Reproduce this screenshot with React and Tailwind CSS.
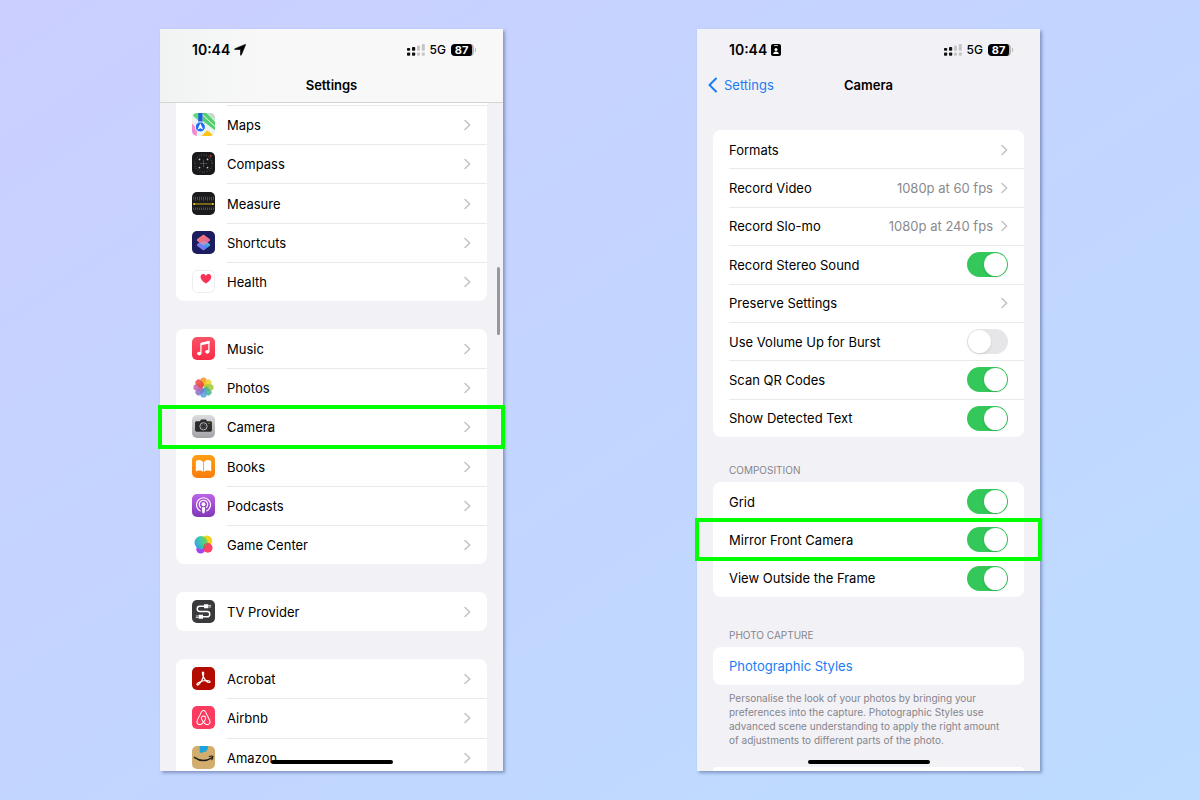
import React from 'react'
import { FaAirbnb } from 'react-icons/fa'

const MapsIcon = () => (
  <>
    <rect width="24" height="24" fill="#eef3f2" />
    <path d="M0 0h7v8L0 2z" fill="#5fdc7c" />
    <path d="M11 0h4l9 9v9L11 8z" fill="#4fd06c" />
    <path d="M11 2l13 12" stroke="#c9f0d2" strokeWidth="1.200" />
    <path d="M15 0h9v8z" fill="#b9e8c4" />
    <path d="M18 0q1 5 6 5V0z" fill="#cfd3cf" />
    <path d="M0 11l5 5v8H0z" fill="#f28bd0" />
    <path d="M10 24l6-6 7 6z" fill="#fbc513" />
    <path d="M6.500 0h4.500v10h-4.500z" fill="#1c62d8" />
    <circle cx="8.700" cy="14.500" r="5.300" fill="#1f70f0" stroke="#fff" strokeWidth="1" />
    <path d="M8.700 10.800l2.900 6.500-2.900-1.400-2.900 1.400z" fill="#fff" />
  </>
)

const CompassIcon = () => (
  <>
    <rect width="24" height="24" fill="#19191b" />
    <circle cx="12" cy="12" r="9" fill="none" stroke="#6f6f72" strokeWidth="1.500" strokeDasharray="0.500 2" />
    <path d="M12 8v8M8 12h8" stroke="#66666a" strokeWidth="0.700" />
    <g fill="#c9c9c9">
      <circle cx="7.800" cy="7.800" r="0.900" />
      <circle cx="16.200" cy="7.800" r="0.900" />
      <circle cx="7.800" cy="16.200" r="0.900" />
      <circle cx="16.200" cy="16.200" r="0.900" />
    </g>
    <path d="M19 2.500l2 2-2.500.5z" fill="#e0392e" />
  </>
)

const MeasureIcon = () => (
  <>
    <rect width="24" height="24" fill="#1b1b1d" />
    <path d="M1 6.500h22" stroke="#68686b" strokeWidth="3" strokeDasharray="0.700 1.400" />
    <path d="M3 8.500h18" stroke="#7c7c7e" strokeWidth="1" strokeDasharray="0.700 3.500" />
    <path d="M2 12.500h20" stroke="#d8b81c" strokeWidth="1" />
    <circle cx="2.200" cy="12.500" r="1" fill="#f8d62f" />
    <circle cx="21.800" cy="12.500" r="1" fill="#f8d62f" />
    <path d="M1 17.500h22" stroke="#68686b" strokeWidth="2.500" strokeDasharray="0.700 1.400" />
  </>
)

const ShortcutsIcon = () => (
  <>
    <defs>
      <linearGradient id="sc-top" x1="0" y1="0" x2="1" y2="1">
        <stop offset="0" stopColor="#f27f6c" />
        <stop offset="1" stopColor="#e05fa5" />
      </linearGradient>
      <linearGradient id="sc-bottom" x1="1" y1="0" x2="0" y2="1">
        <stop offset="0" stopColor="#3fd6c8" />
        <stop offset="0.500" stopColor="#4a8ff5" />
        <stop offset="1" stopColor="#b064f0" />
      </linearGradient>
    </defs>
    <rect width="24" height="24" fill="#1c1d5e" />
    <path d="M12 10.500l5.700 4.200L12 18.900l-5.700-4.200z" fill="url(#sc-bottom)" stroke="url(#sc-bottom)" strokeWidth="2.500" strokeLinejoin="round" />
    <path d="M12 5.100l5.700 4.200L12 13.500 6.300 9.300z" fill="url(#sc-top)" stroke="url(#sc-top)" strokeWidth="2.500" strokeLinejoin="round" />
    <path d="M12 10.500l4.800 1.700-4.300 2.700q-.5.300-1 0l-3.500-2.400z" fill="#b9a0cf" opacity="0.700" />
  </>
)

const HealthIcon = () => (
  <>
    <rect x="0.500" y="0.500" width="23" height="23" rx="5" fill="#fff" stroke="#ececee" />
    <path d="M14.500 14.200C11 11.700 8.900 9.900 8.900 7.300c0-1.800 1.300-3 2.800-3 1.200 0 2.200.6 2.800 1.600.6-1 1.600-1.600 2.800-1.600 1.500 0 2.800 1.200 2.800 3 0 2.600-2.100 4.400-5.600 6.900z" fill="#fb3158" />
  </>
)

const MusicIcon = () => (
  <>
    <defs>
      <linearGradient id="music-bg" x1="0" y1="0" x2="0" y2="1">
        <stop offset="0" stopColor="#fb5266" />
        <stop offset="1" stopColor="#fa2c46" />
      </linearGradient>
    </defs>
    <rect width="24" height="24" fill="url(#music-bg)" />
    <path d="M9.300 17V7l8.300-1.900v9.900" fill="none" stroke="#fff" strokeWidth="1.300" />
    <path d="M9.300 6l8.900-2v2.700l-8.900 2z" fill="#fff" />
    <ellipse cx="7.600" cy="17.300" rx="2.300" ry="1.900" fill="#fff" />
    <ellipse cx="16" cy="15.500" rx="2.300" ry="1.900" fill="#fff" />
  </>
)

const petals = ['#f7941c', '#e9d32b', '#9fca3f', '#45b585', '#559fde', '#8371c7', '#c066b0', '#f0473f']

const PhotosIcon = () => (
  <>
    <rect width="24" height="24" fill="#fff" />
    {petals.map((color, i) => (
      <rect
        key={color}
        x="8.700"
        y="1.500"
        width="6.600"
        height="9.800"
        rx="3.300"
        fill={color}
        opacity="0.850"
        transform={`rotate(${i * 45} 12 12)`}
      />
    ))}
  </>
)

const CameraIcon = () => (
  <>
    <defs>
      <linearGradient id="cam-bg" x1="0" y1="0" x2="0" y2="1">
        <stop offset="0" stopColor="#dcdcde" />
        <stop offset="1" stopColor="#a3a3a7" />
      </linearGradient>
    </defs>
    <rect width="24" height="24" fill="url(#cam-bg)" />
    <path d="M4.800 6.500h3.500l1.200-1.800h5l1.200 1.800h3.500c.9 0 1.600.6 1.600 1.500v8c0 .9-.7 1.500-1.600 1.500H4.800c-.9 0-1.600-.6-1.600-1.500V8c0-.9.700-1.500 1.600-1.500z" fill="#2b2b2d" />
    <circle cx="12" cy="11.800" r="3.800" fill="#2b2b2d" stroke="#c8c8ca" strokeWidth="0.900" />
    <circle cx="12" cy="11.800" r="2" fill="none" stroke="#66666a" strokeWidth="0.600" />
    <circle cx="17.800" cy="8.700" r="0.600" fill="#d9a520" />
  </>
)

const BooksIcon = () => (
  <>
    <defs>
      <linearGradient id="books-bg" x1="0" y1="0" x2="0" y2="1">
        <stop offset="0" stopColor="#fe9f15" />
        <stop offset="1" stopColor="#fb7d0c" />
      </linearGradient>
    </defs>
    <rect width="24" height="24" fill="url(#books-bg)" />
    <path d="M11.600 7.200C10.300 5.700 8.600 5.200 7.300 5.200 5.500 5.200 4 6 4 7v10.300c1-.8 2.100-1.100 3.500-1.100 1.600 0 3 .5 4.100 1.500z" fill="#fff" />
    <path d="M12.400 7.200c1.300-1.500 3-2 4.300-2C18.500 5.200 20 6 20 7v10.300c-1-.8-2.100-1.100-3.500-1.100-1.600 0-3 .5-4.100 1.500z" fill="#fff" />
  </>
)

const PodcastsIcon = () => (
  <>
    <defs>
      <linearGradient id="pod-bg" x1="0" y1="0" x2="0" y2="1">
        <stop offset="0" stopColor="#bd65e4" />
        <stop offset="1" stopColor="#8136b8" />
      </linearGradient>
    </defs>
    <rect width="24" height="24" fill="url(#pod-bg)" />
    <g fill="none" stroke="#fff" strokeWidth="1.200" strokeLinecap="round">
      <path d="M8.500 17.600a7.300 7.300 0 1 1 7 0" />
      <path d="M8.900 14a4.400 4.400 0 1 1 6.200 0" />
    </g>
    <circle cx="12" cy="10.700" r="2" fill="#fff" />
    <path d="M10.300 13.800h3.400l-.5 5.600q-.2.900-1.200.9t-1.200-.9z" fill="#fff" />
  </>
)

const GameCenterIcon = () => (
  <>
    <defs>
      <linearGradient id="gc-main" x1="0" y1="0.600" x2="1" y2="0.300">
        <stop offset="0" stopColor="#2a9df4" />
        <stop offset="0.500" stopColor="#35c9a0" />
        <stop offset="1" stopColor="#7fd24a" />
      </linearGradient>
    </defs>
    <rect width="24" height="24" fill="#fff" />
    <circle cx="15.500" cy="8" r="5.500" fill="#f5d21f" />
    <circle cx="9" cy="17" r="4.500" fill="#a345f0" />
    <circle cx="9.500" cy="10" r="6.900" fill="url(#gc-main)" opacity="0.950" />
    <circle cx="16.500" cy="15.500" r="5" fill="#fb3a63" opacity="0.950" />
    <path d="M11.700 15.500a4.800 4.800 0 0 1 4.500-4.800q-1 4-4.400 5.600z" fill="#a77550" />
  </>
)

const TvProviderIcon = () => (
  <>
    <rect width="24" height="24" fill="#3a3a3c" />
    <path d="M13.500 6.500H8.200a2.750 2.750 0 0 0 0 5.500h7.600a2.750 2.750 0 0 1 0 5.500h-5.300" fill="none" stroke="#fff" strokeWidth="1.500" />
    <path d="M12.500 4.500h4.500v4h-4.500zM7 15.500h4.500v4H7z" fill="#fff" />
    <path d="M17 5.700h3M17 7.300h3M4 16.700h3M4 18.300h3" stroke="#fff" strokeWidth="0.800" />
  </>
)

const AcrobatIcon = () => (
  <>
    <rect width="24" height="24" fill="#b30b00" />
    <path
      d="M11.500 5.200c-1.100 0-.8 2.700.4 5.100 1.300 2.600 3.300 5.200 5.400 5.800 1.500.4 2.100-.7 1.200-1.400-1.500-1.200-6.900-.6-10.300.9-2.500 1.100-3.600 2.500-2.900 3.100 1.200 1 4.300-3 5.700-6.500 1.200-3 1.700-7 .5-7z"
      fill="none"
      stroke="#fff"
      strokeWidth="1.200"
    />
  </>
)

const AirbnbIcon = () => (
  <>
    <rect width="24" height="24" fill="#fb3b5f" />
    <FaAirbnb x="3" y="3" size="18" color="#fff" />
  </>
)

const AmazonIcon = () => (
  <>
    <rect width="24" height="24" fill="#d3ad6e" />
    <path d="M8 0h8.500v3.500l-1.500 1v1.500h-3l-1 1H8z" fill="#1ba3e0" />
    <path d="M2.500 11.800q9 6.400 18 .6" fill="none" stroke="#1d1c1a" strokeWidth="1.500" strokeLinecap="round" />
    <path d="M18 10.900q2.500-.8 3.700-.2.300 1.400-1 3.600" fill="none" stroke="#1d1c1a" strokeWidth="1.200" strokeLinecap="round" />
  </>
)

const appGroups = [
  {
    height: 'min-h-[196px] rounded-b-lg',
    apps: [
      { name: 'Maps', Icon: MapsIcon, divided: true },
      { name: 'Compass', Icon: CompassIcon },
      { name: 'Measure', Icon: MeasureIcon },
      { name: 'Shortcuts', Icon: ShortcutsIcon },
      { name: 'Health', Icon: HealthIcon },
    ],
  },
  {
    height: 'min-h-[235px] rounded-lg',
    apps: [
      { name: 'Music', Icon: MusicIcon },
      { name: 'Photos', Icon: PhotosIcon },
      { name: 'Camera', Icon: CameraIcon, highlighted: true },
      { name: 'Books', Icon: BooksIcon },
      { name: 'Podcasts', Icon: PodcastsIcon },
      { name: 'Game Center', Icon: GameCenterIcon },
    ],
  },
  {
    height: 'min-h-[39px] rounded-lg',
    apps: [{ name: 'TV Provider', Icon: TvProviderIcon }],
  },
  {
    height: 'min-h-[118px] rounded-t-lg',
    apps: [
      { name: 'Acrobat', Icon: AcrobatIcon },
      { name: 'Airbnb', Icon: AirbnbIcon },
      { name: 'Amazon', Icon: AmazonIcon },
    ],
  },
]

const captureRows = [
  { name: 'Formats' },
  { name: 'Record Video', value: '1080p at 60 fps' },
  { name: 'Record Slo-mo', value: '1080p at 240 fps' },
  { name: 'Record Stereo Sound', toggle: true, on: true },
  { name: 'Preserve Settings' },
  { name: 'Use Volume Up for Burst', toggle: true, on: false },
  { name: 'Scan QR Codes', toggle: true, on: true },
  { name: 'Show Detected Text', toggle: true, on: true },
]

const compositionRows = [
  { name: 'Grid', toggle: true, on: true },
  { name: 'Mirror Front Camera', toggle: true, on: true, highlighted: true },
  { name: 'View Outside the Frame', toggle: true, on: true },
]

const Chevron = () => (
  <svg className="w-[7px] h-3 shrink-0" viewBox="0 0 7 12" fill="none" stroke="#c2c2c5" strokeWidth="1.500" strokeLinecap="round" strokeLinejoin="round">
    <path d="M1 1.500L5.700 6 1 10.500" />
  </svg>
)

const Highlight = () => (
  <span className="absolute -inset-x-[18px] -inset-y-[2px] z-10 border-4 border-[#00ff00] pointer-events-none" />
)

const StatusBar = ({ children }) => (
  <div className="h-[42px] pl-8 pr-[27px] flex items-center justify-between">
    <div className="flex items-center gap-1 text-sm font-semibold">
      <span>10:44</span>
      {children}
    </div>
    <div className="flex items-center gap-[5px]">
      <svg className="w-[18px] h-3" viewBox="0 0 18 12">
        <g fill="#111">
          <rect x="0" y="4" width="3.200" height="2.800" rx="0.800" />
          <rect x="0" y="8.500" width="3.200" height="3.200" rx="0.800" />
          <rect x="5" y="3" width="3.200" height="3.800" rx="0.800" />
          <rect x="5" y="8.500" width="3.200" height="3.200" rx="0.800" />
        </g>
        <g fill="#c6c6ca">
          <rect x="10" y="1.500" width="3" height="5.300" rx="0.800" />
          <rect x="10" y="8.500" width="3" height="3.200" rx="0.800" />
          <rect x="14.800" y="0" width="3" height="6.800" rx="0.800" />
          <rect x="14.800" y="8.500" width="3" height="3.200" rx="0.800" />
        </g>
      </svg>
      <span className="text-xs font-medium">5G</span>
      <span className="flex items-center gap-px">
        <span className="w-[23px] h-3 rounded-[4px] bg-black border-r-2 border-[#b5b5b8] flex items-center justify-center text-[11px] leading-3 font-bold text-white">
          87
        </span>
        <span className="w-px h-1 rounded-r bg-[#b5b5b8]" />
      </span>
    </div>
  </div>
)

const HomeIndicator = () => (
  <div className="absolute bottom-[7px] left-1/2 -translate-x-1/2 w-[122px] h-1 rounded-full bg-black" />
)

const AppRow = ({ name, Icon, first, divided, highlighted }) => (
  <li className="relative flex-1 flex">
    <a href="#" className="flex-1 flex items-center gap-3 pl-4">
      <svg className="size-[23px] rounded-[5px] shrink-0" viewBox="0 0 24 24">
        <Icon />
      </svg>
      <span className={`flex-1 self-stretch flex items-center justify-between pr-4 border-t ${first && !divided ? 'border-transparent' : 'border-[#e9e9ec]'}`}>
        {name}
        <Chevron />
      </span>
    </a>
    {highlighted && <Highlight />}
  </li>
)

const SettingRow = ({ name, value, toggle, on, first, highlighted }) => {
  const Tag = toggle ? 'label' : 'a'
  return (
    <li className="relative flex-1 flex pl-4">
      <Tag
        href={toggle ? undefined : '#'}
        className={`flex-1 flex items-center pr-4 border-t ${first ? 'border-transparent' : 'border-[#e9e9ec]'}`}
      >
        <span className="flex-1">{name}</span>
        {value && <span className="mr-2 text-[#8a8a8e]">{value}</span>}
        {toggle ? (
          <input
            type="checkbox"
            defaultChecked={on}
            className="appearance-none w-[41px] h-[25px] p-px rounded-full bg-[#e6e6e8] checked:bg-[#34c759] before:block before:size-[23px] before:rounded-full before:bg-white before:shadow-sm checked:before:translate-x-4"
          />
        ) : (
          <Chevron />
        )}
      </Tag>
      {highlighted && <Highlight />}
    </li>
  )
}

const SettingGroup = ({ rows, className }) => (
  <ul className={`mx-4 rounded-lg bg-white flex flex-col ${className}`}>
    {rows.map((row, index) => (
      <SettingRow key={row.name} {...row} first={index === 0} />
    ))}
  </ul>
)

const phoneClass = 'relative flex flex-col overflow-y-clip bg-[#f2f1f6] shadow-[2px_2px_3px_rgba(70,85,140,0.5)]'

const SettingsScreen = () => (
  <section className={phoneClass}>
    <header className="shrink-0 pb-[3px] border-b border-[#d4d4d6] bg-linear-to-r from-[#f1f3f3] to-[#f8f8f8] to-30%">
      <StatusBar>
        <svg className="size-3" viewBox="0 0 12 12">
          <path d="M11.300.4c.3-.1.500.1.300.4L7.300 11c-.2.500-.8.400-.8-.1V5.800c0-.2-.1-.3-.3-.3H1c-.5 0-.6-.6-.1-.8z" stroke="#000" strokeWidth="0.600" />
        </svg>
      </StatusBar>
      <h1 className="h-7 flex items-center justify-center font-semibold">Settings</h1>
    </header>
    <div className="flex-1 min-h-0 px-4 flex flex-col gap-7 overflow-y-clip">
      {appGroups.map((group, index) => (
        <ul key={group.apps[0].name} className={`shrink-0 bg-white flex flex-col ${group.height} ${index === 0 ? 'pt-[2px] box-content' : ''}`}>
          {group.apps.map((app, appIndex) => (
            <AppRow key={app.name} {...app} first={appIndex === 0} />
          ))}
        </ul>
      ))}
    </div>
    {/* Scroll indicator */}
    <div className="absolute right-[3px] top-[238px] w-[3px] h-[68px] rounded-full bg-[#98989c]" />
    <HomeIndicator />
  </section>
)

const CameraScreen = () => (
  <section className={phoneClass}>
    <header className="shrink-0">
      <StatusBar>
        <svg className="w-[10px] h-3" viewBox="0 0 10 12">
          <rect width="10" height="12" rx="2" />
          <rect x="3" y="1.200" width="4" height="0.900" rx="0.400" fill="#fff" />
          <circle cx="5" cy="5.500" r="1.500" fill="#fff" />
          <path d="M2.200 10c0-1.800 1.200-2.600 2.800-2.600s2.800.8 2.800 2.600z" fill="#fff" />
        </svg>
      </StatusBar>
      <div className="h-7 px-[11px] grid grid-cols-3 items-center">
        <a href="#" className="flex items-center gap-[7px] text-[#1a7cf5]">
          <svg className="w-[9px] h-4" viewBox="0 0 9 16" fill="none" stroke="currentColor" strokeWidth="2" strokeLinecap="round" strokeLinejoin="round">
            <path d="M8 1.500L1.500 8 8 14.500" />
          </svg>
          Settings
        </a>
        <h1 className="text-center font-semibold">Camera</h1>
      </div>
    </header>
    <SettingGroup rows={captureRows} className="mt-[31px] min-h-[307px] shrink-0" />

    <h2 className="mt-[26px] mb-[5px] px-8 text-[10px] leading-[14px] text-[#85858a]">COMPOSITION</h2>
    <SettingGroup rows={compositionRows} className="min-h-[115px] shrink-0" />

    <h2 className="mt-[31px] mb-[5px] px-8 text-[10px] leading-[14px] text-[#85858a]">PHOTO CAPTURE</h2>
    <div className="mx-4 min-h-[38px] shrink-0 px-4 rounded-lg bg-white flex items-center">
      <a href="#" className="text-[#1a7cf5]">Photographic Styles</a>
    </div>
    <p className="mt-[6px] pl-8 pr-10 text-[10px] leading-[14px] text-[#85858a]">
      Personalise the look of your photos by bringing your preferences into the capture. Photographic Styles use
      advanced scene understanding to apply the right amount of adjustments to different parts of the photo.
    </p>
    <div className="mt-5 mx-4 flex-1 rounded-t-lg bg-white" />
    <HomeIndicator />
  </section>
)

export default function App() {
  return (
    <main className="h-screen px-40 py-[29px] grid grid-cols-2 grid-rows-1 gap-[194px] bg-linear-to-br from-[#cbcfff] via-[#c2d5ff] to-[#bddcff] font-['Inter',sans-serif] text-[13px] leading-4 text-black">
      <SettingsScreen />
      <CameraScreen />
    </main>
  )
}
